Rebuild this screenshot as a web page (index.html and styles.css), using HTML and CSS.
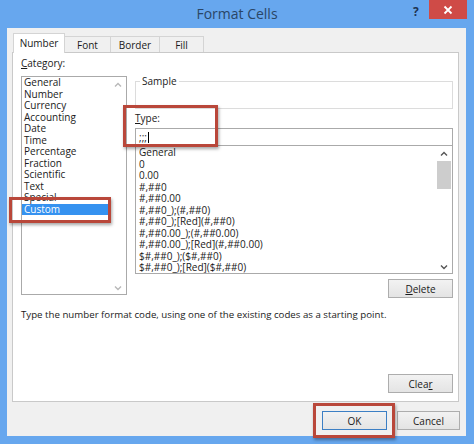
FILE: index.html
```html
<!DOCTYPE html>
<html>
<head>
<meta charset="utf-8">
<link rel="stylesheet" href="styles.css">
</head>
<body>
<div class="titlebar">
  <span class="title">Format Cells</span>
  <span class="help">?</span>
  <span class="close"><svg width="10" height="10" viewBox="0 0 10 10"><path d="M1.5 1.5 L8.5 8.5 M8.5 1.5 L1.5 8.5" stroke="#fff" stroke-width="1.8" fill="none"/></svg></span>
</div>
<div class="window">
  <div class="tabs">
    <div class="tab active">Number</div>
    <div class="tab t-font">Font</div>
    <div class="tab t-border">Border</div>
    <div class="tab t-fill">Fill</div>
  </div>
  <div class="panel">
    <div class="cols">
      <div class="left">
        <div class="label"><u>C</u>ategory:</div>
        <div class="catlist">
          <div class="items">
            <div class="item">General</div>
            <div class="item">Number</div>
            <div class="item">Currency</div>
            <div class="item">Accounting</div>
            <div class="item">Date</div>
            <div class="item">Time</div>
            <div class="item">Percentage</div>
            <div class="item">Fraction</div>
            <div class="item">Scientific</div>
            <div class="item">Text</div>
            <div class="item">Special</div>
            <div class="item sel">Custom</div>
          </div>
          <div class="vscroll light">
            <svg class="arr" width="14" height="12" viewBox="0 0 14 12"><path d="M4 7.5 L7 4.5 L10 7.5" stroke="#b8b8b8" stroke-width="1.4" fill="none"/></svg>
            <div class="track"></div>
            <svg class="arr" width="14" height="12" viewBox="0 0 14 12"><path d="M4 4.5 L7 7.5 L10 4.5" stroke="#b8b8b8" stroke-width="1.4" fill="none"/></svg>
          </div>
        </div>
      </div>
      <div class="right">
        <div class="sample"><span class="legend">Sample</span></div>
        <div class="label"><u>T</u>ype:</div>
        <div class="typeinput">;;;<span class="caret"></span></div>
        <div class="fmtlist">
          <div class="items fitems">
            <div class="item">General</div>
            <div class="item">0</div>
            <div class="item">0.00</div>
            <div class="item">#,##0</div>
            <div class="item">#,##0.00</div>
            <div class="item">#,##0_);(#,##0)</div>
            <div class="item">#,##0_);[Red](#,##0)</div>
            <div class="item">#,##0.00_);(#,##0.00)</div>
            <div class="item">#,##0.00_);[Red](#,##0.00)</div>
            <div class="item">$#,##0_);($#,##0)</div>
            <div class="item">$#,##0_);[Red]($#,##0)</div>
          </div>
          <div class="vscroll">
            <svg class="arr" width="14" height="12" viewBox="0 0 14 12"><path d="M4 7.5 L7 4.5 L10 7.5" stroke="#555" stroke-width="1.4" fill="none"/></svg>
            <div class="track"><div class="thumb"></div></div>
            <svg class="arr" width="14" height="12" viewBox="0 0 14 12"><path d="M4 4.5 L7 7.5 L10 4.5" stroke="#555" stroke-width="1.4" fill="none"/></svg>
          </div>
        </div>
        <div class="btnrow"><div class="btn"><u>D</u>elete</div></div>
      </div>
    </div>
    <div class="desc">Type the number format code, using one of the existing codes as a starting point.</div>
    <div class="btnrow clearrow"><div class="btn">Clea<u>r</u></div></div>
  </div>
  <div class="footer">
    <div class="btn ok">OK</div>
    <div class="btn cancel">Cancel</div>
  </div>
</div>
<div class="mark mark-type"></div>
<div class="mark mark-custom"></div>
<div class="mark mark-ok"></div>
</body>
</html>
```
FILE: styles.css
```css
* { box-sizing: border-box; }
html, body { margin: 0; padding: 0; }
body {
  width: 474px; height: 444px; overflow: hidden;
  background: #67a7ee;
  font-family: "Open Sans", "Noto Sans", sans-serif;
  font-size: 10px;
  color: #1a1a1a;
  position: relative;
}
.titlebar {
  height: 28px; position: relative;
  display: flex; align-items: center; justify-content: center;
}
.title { font-size: 14px; color: #2a4666; margin-top: -1px; }
.help {
  position: absolute; left: 413px; top: 3px;
  font-size: 12px; font-weight: bold; color: #1e3352;
}
.close {
  position: absolute; left: 429px; top: 0; width: 38px; height: 19px;
  background: #cf4b47;
  display: flex; align-items: center; justify-content: center;
}
.window {
  margin-left: 7px; width: 459px; height: 408px;
  background: #f0f0f0;
  display: flex; flex-direction: column;
}
.tabs {
  height: 24px; display: flex; align-items: flex-end;
  padding-left: 6px;
}
.tab {
  height: 16px; border: 1px solid #d4d4d4; border-bottom: none; border-left: none;
  background: #f0f0f0;
  display: flex; align-items: center; justify-content: center;
  padding-top: 1px;
}
.tab.active {
  width: 52px; background: #fff; border-left: 1px solid #d4d4d4;
  position: relative; z-index: 1; margin-bottom: -1px; height: 20px;
  padding-bottom: 2px;
}
.t-font { width: 46px; }
.t-border { width: 49px; }
.t-fill { width: 44px; }
.panel {
  margin-left: 5px; width: 447px; height: 350px;
  background: #fff; border: 1px solid #c9c9c9;
  padding: 3px 5px 8px 8px;
  display: flex; flex-direction: column;
}
.cols { display: flex; gap: 8px; }
.left { width: 106px; }
.right { width: 318px; }
.label { height: 14px; line-height: 14px; }
.catlist {
  margin-top: 6px; height: 219px;
  border: 1px solid #aaa; display: flex;
}
.items { flex: 1; padding-top: 0; }
.item { height: 11.5px; line-height: 11.5px; padding-left: 2px; white-space: nowrap; }
.item.sel { background: #3592f0; color: #fff; }
.vscroll { width: 15px; display: flex; flex-direction: column; }
.vscroll .arr { display: block; flex: none; margin-top: 2px; }
.vscroll .track { flex: 1; }
.vscroll .thumb { width: 14px; height: 28px; margin-top: 1px; background: #cdcdcd; }
.sample {
  margin-top: 25px; height: 28px; border: 1px solid #dcdcdc; position: relative;
}
.legend {
  position: absolute; left: 4px; top: -8px; background: #fff; padding: 0 2px;
  line-height: 14px;
}
.right .label { margin-top: 2px; }
.typeinput {
  margin-top: 3px; height: 17px; border: 1px solid #aaa; border-bottom: none;
  padding-left: 3px; line-height: 16px; display: flex; align-items: center;
}
.caret { display: inline-block; width: 1px; height: 11px; background: #000; margin-left: 1px; }
.fmtlist {
  height: 129px; border: 1px solid #aaa; display: flex;
}
.fitems { padding-top: 1px; }
.fitems .item { padding-left: 3px; }
.btnrow { display: flex; justify-content: flex-end; margin-top: 5px; }
.btn {
  width: 65px; height: 19px;
  border: 1px solid #adadad;
  background: linear-gradient(#f2f2f2, #e4e4e4);
  display: flex; align-items: center; justify-content: center;
}
.desc { margin-top: 10px; line-height: 14px; font-size: 9.7px; }
.clearrow { margin-top: auto; }
.footer {
  flex: 1; display: flex; justify-content: flex-end; align-items: flex-start;
  padding-top: 9px; padding-right: 6px; gap: 10px;
}
.btn.ok { border-color: #3c7fc4; }
.btn.cancel { width: 63px; }
.mark {
  position: absolute; border: 3px solid #b9473a;
  box-shadow: 1px 2px 3px rgba(0,0,0,0.35);
}
.mark-type { left: 123px; top: 105px; width: 95px; height: 42px; }
.mark-custom { left: 9px; top: 197px; width: 102px; height: 26px; }
.mark-ok { left: 313px; top: 403px; width: 82px; height: 35px; }
```
